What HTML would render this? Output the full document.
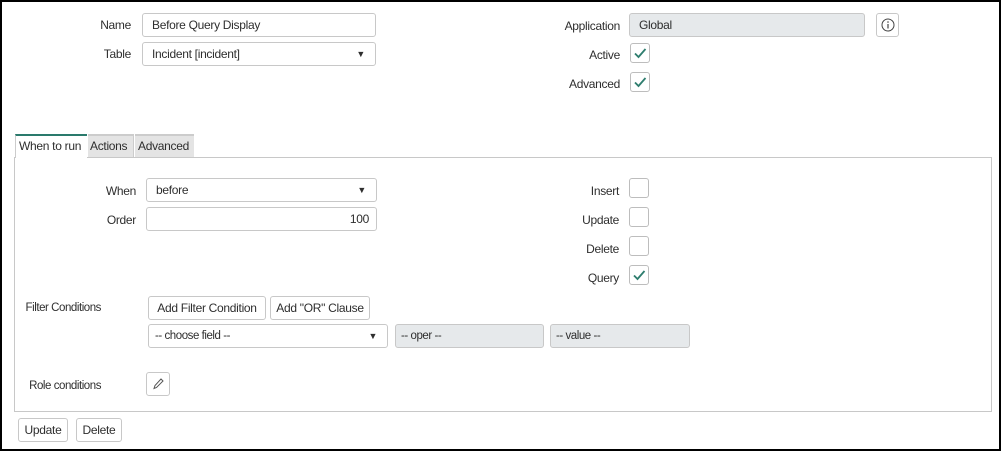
<!DOCTYPE html>
<html><head><style>
body{margin:0;width:1001px;height:451px;overflow:hidden;background:#fff;font-family:"Liberation Sans",sans-serif;font-size:12px;color:#2e2e2e;letter-spacing:-0.3px;}
.frame{position:absolute;left:0;top:0;width:997px;height:447px;border:2px solid #000;}
.a{position:absolute;}
.lbl{position:absolute;text-align:right;width:200px;line-height:16px;}
.inp{position:absolute;border:1px solid #c8c8c8;border-radius:3px;background:#fff;box-sizing:border-box;line-height:23px;padding-left:9px;}
.ro{background:#e6e9eb;}
.cb{position:absolute;width:20px;height:20px;border:1px solid #bdbdbd;border-radius:3px;box-sizing:border-box;background:#fff;}
.btn{position:absolute;border:1px solid #c8c8c8;border-radius:3px;box-sizing:border-box;background:#fff;text-align:center;line-height:22px;color:#2e2e2e;}
.arr{position:absolute;right:10px;top:0;font-size:9px;}
.sm{font-size:11.5px;letter-spacing:-0.45px;}
</style></head><body>
<div class="frame"></div>
<div class="lbl" style="left:-69px;top:17px">Name</div>
<div class="inp" style="left:142px;top:13px;width:234px;height:24px">Before Query Display</div>
<div class="lbl" style="left:-69px;top:46px">Table</div>
<div class="inp" style="left:142px;top:42px;width:234px;height:24px">Incident [incident]<span class="arr">▼</span></div>

<div class="lbl" style="left:420px;top:18px">Application</div>
<div class="inp ro" style="left:629px;top:13px;width:236px;height:24px">Global</div>
<div class="btn" style="left:876px;top:13px;width:23px;height:24px"><svg width="14" height="14" viewBox="0 0 14 14" style="margin-top:4px"><circle cx="7" cy="7" r="6" fill="none" stroke="#444" stroke-width="1"/><line x1="7" y1="6" x2="7" y2="10.5" stroke="#444" stroke-width="1.2"/><circle cx="7" cy="4" r=".8" fill="#444"/></svg></div>
<div class="lbl" style="left:420px;top:47px">Active</div>
<div class="cb" style="left:630px;top:43px"><svg width="18" height="18"><path d="M4 9.5l3.5 3.5 7-8" fill="none" stroke="#2e7d6e" stroke-width="1.8"/></svg></div>
<div class="lbl" style="left:420px;top:76px">Advanced</div>
<div class="cb" style="left:630px;top:72px"><svg width="18" height="18"><path d="M4 9.5l3.5 3.5 7-8" fill="none" stroke="#2e7d6e" stroke-width="1.8"/></svg></div>

<div class="a" style="left:14px;top:157px;width:978px;height:255px;border:1px solid #c8c8c8;box-sizing:border-box"></div>
<div class="a" style="left:15px;top:134px;width:72px;height:24px;border-top:2px solid #2a7a6c;border-left:1px solid #ccc;background:#fff;box-sizing:border-box;line-height:21px;padding-left:3px">When to run</div>
<div class="a" style="left:88px;top:134px;width:46px;height:23px;background:#e4e4e4;border-top:2px solid #ccc;border-right:1px solid #ccc;box-sizing:border-box;line-height:21px;padding-left:2px">Actions</div>
<div class="a" style="left:135px;top:134px;width:59px;height:23px;background:#e4e4e4;border-top:2px solid #ccc;box-sizing:border-box;line-height:21px;padding-left:3px">Advanced</div>

<div class="lbl" style="left:-64px;top:183px">When</div>
<div class="inp" style="left:146px;top:178px;width:231px;height:24px">before<span class="arr">▼</span></div>
<div class="lbl" style="left:-64px;top:212px">Order</div>
<div class="inp" style="left:146px;top:207px;width:231px;height:24px;text-align:right;padding-right:7px">100</div>

<div class="lbl" style="left:419px;top:183px">Insert</div>
<div class="cb" style="left:629px;top:178px"></div>
<div class="lbl" style="left:419px;top:212px">Update</div>
<div class="cb" style="left:629px;top:207px"></div>
<div class="lbl" style="left:419px;top:241px">Delete</div>
<div class="cb" style="left:629px;top:236px"></div>
<div class="lbl" style="left:419px;top:270px">Query</div>
<div class="cb" style="left:629px;top:265px"><svg width="18" height="18"><path d="M4 9.5l3.5 3.5 7-8" fill="none" stroke="#2e7d6e" stroke-width="1.8"/></svg></div>

<div class="lbl sm" style="left:-99px;top:300px">Filter Conditions</div>
<div class="btn" style="left:148px;top:296px;width:118px;height:24px">Add Filter Condition</div>
<div class="btn" style="left:270px;top:296px;width:100px;height:24px">Add "OR" Clause</div>
<div class="inp sm" style="left:148px;top:324px;width:240px;height:24px;padding-left:6px">-- choose field --<span class="arr">▼</span></div>
<div class="inp ro sm" style="left:395px;top:324px;width:149px;height:24px;padding-left:5px">-- oper --</div>
<div class="inp ro sm" style="left:550px;top:324px;width:140px;height:24px;padding-left:5px">-- value --</div>

<div class="lbl sm" style="left:-99px;top:378px">Role conditions</div>
<div class="btn" style="left:146px;top:372px;width:24px;height:24px"><svg width="14" height="14" viewBox="0 0 14 14" style="margin-top:4px"><path d="M3 11.5l1-3 6-6.5 2 2-6.5 6.5z" fill="none" stroke="#555" stroke-width="1"/></svg></div>

<div class="btn" style="left:18px;top:418px;width:50px;height:24px">Update</div>
<div class="btn" style="left:76px;top:418px;width:46px;height:24px">Delete</div>
</body></html>
